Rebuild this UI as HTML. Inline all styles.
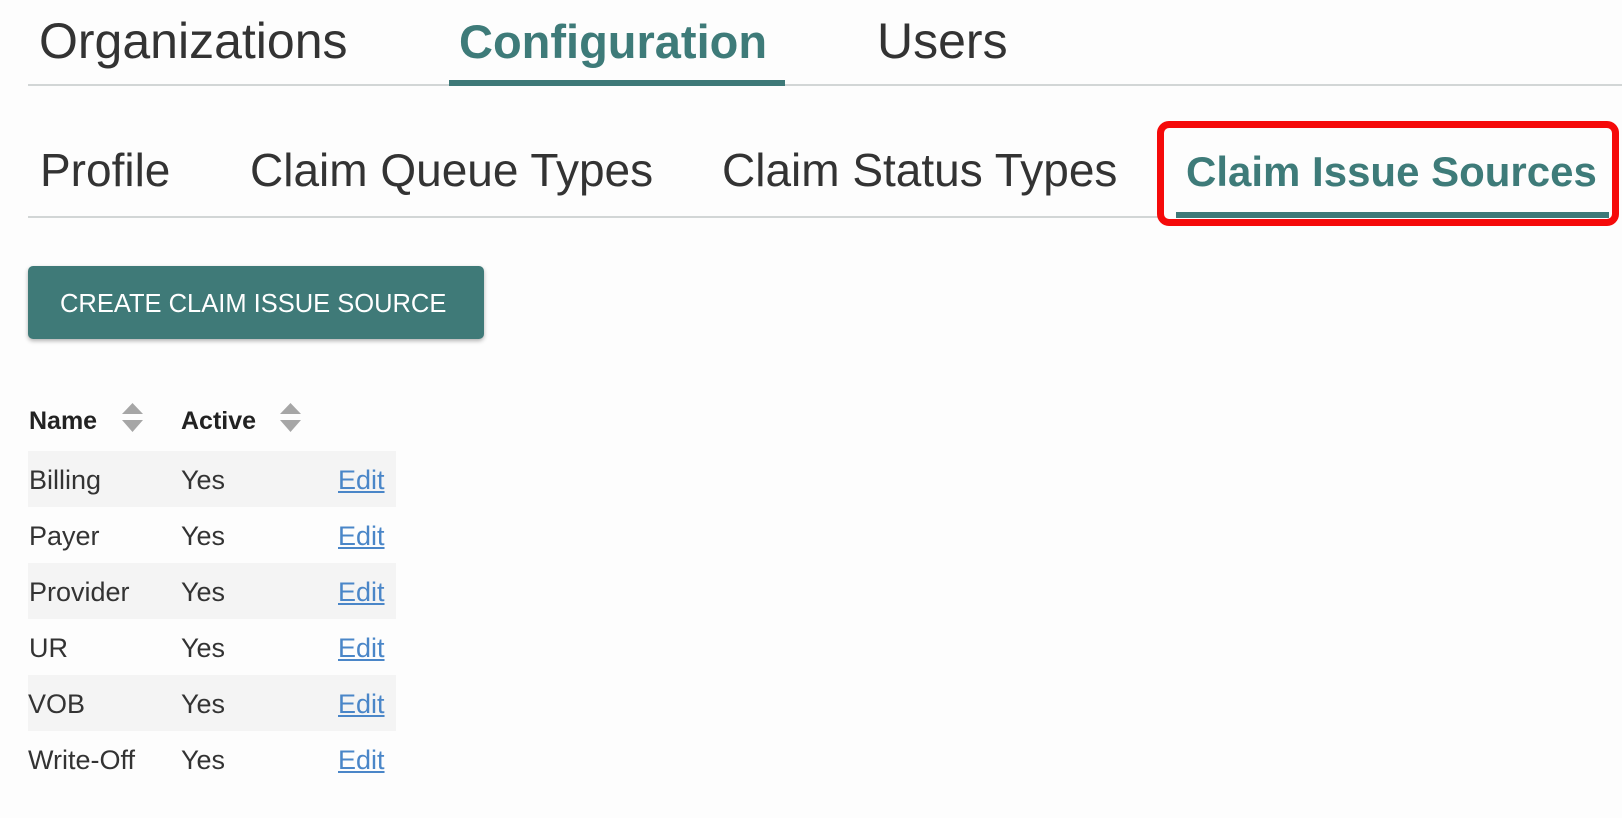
<!DOCTYPE html>
<html><head><meta charset="utf-8"><style>
*{margin:0;padding:0;box-sizing:border-box}
body{width:1622px;height:818px;background:#fdfdfd;font-family:"Liberation Sans",sans-serif;color:#333;position:relative;overflow:hidden}
.t{position:absolute;line-height:1;white-space:nowrap}
.nav{font-size:50px;top:16px;color:#333}
.sub{font-size:46px;top:147px;color:#333}
.teal{color:#3e7b79;font-weight:bold}
.line{position:absolute;background:#d2d6d6}
.ul{position:absolute;background:#3e7978}
.row{position:absolute;left:28px;width:368px;height:56px;font-size:27px}
.row span{position:absolute;top:16px;line-height:1}
.row .e{left:310px;color:#4a86c8;text-decoration:underline}
.odd{background:#f4f4f4}
.sort{position:absolute;width:21px;height:29px}
</style></head><body>
<div class="t nav" style="left:39px">Organizations</div>
<div class="t nav teal" style="left:459px;font-size:47px;top:18px">Configuration</div>
<div class="t nav" style="left:877px">Users</div>
<div class="line" style="left:28px;right:0;top:84px;height:2px"></div>
<div class="ul" style="left:449px;width:336px;top:80px;height:6px"></div>

<div class="t sub" style="left:40px">Profile</div>
<div class="t sub" style="left:250px">Claim Queue Types</div>
<div class="t sub" style="left:722px">Claim Status Types</div>
<div class="t sub teal" style="left:1186px;font-size:42px;top:151px">Claim Issue Sources</div>
<div class="line" style="left:28px;width:1135px;top:216px;height:2px"></div>
<div class="ul" style="left:1176px;width:433px;top:212px;height:6px"></div>
<div style="position:absolute;left:1157px;top:121px;width:462px;height:105px;border:7px solid #f50a0a;border-radius:12px"></div>

<div style="position:absolute;left:28px;top:266px;width:456px;height:73px;background:#3f7a78;border-radius:5px;box-shadow:0 2px 4px rgba(0,0,0,.3)"></div>
<div class="t" style="left:60px;top:292px;font-size:25.5px;color:#fff">CREATE CLAIM ISSUE SOURCE</div>

<div class="t" style="left:29px;top:409px;font-size:25px;font-weight:bold;color:#222">Name</div>
<div class="t" style="left:181px;top:409px;font-size:25px;font-weight:bold;color:#222">Active</div>
<svg class="sort" style="left:122px;top:403px" viewBox="0 0 21 29"><path d="M10.5 0 L21 11 H0Z M0 17 H21 L10.5 29Z" fill="#a6a6a6"/></svg>
<svg class="sort" style="left:280px;top:403px" viewBox="0 0 21 29"><path d="M10.5 0 L21 11 H0Z M0 17 H21 L10.5 29Z" fill="#a6a6a6"/></svg>

<div class="row odd" style="top:451px"><span style="left:1px">Billing</span><span style="left:153px">Yes</span><span class="e">Edit</span></div>
<div class="row" style="top:507px"><span style="left:1px">Payer</span><span style="left:153px">Yes</span><span class="e">Edit</span></div>
<div class="row odd" style="top:563px"><span style="left:1px">Provider</span><span style="left:153px">Yes</span><span class="e">Edit</span></div>
<div class="row" style="top:619px"><span style="left:1px">UR</span><span style="left:153px">Yes</span><span class="e">Edit</span></div>
<div class="row odd" style="top:675px"><span style="left:0">VOB</span><span style="left:153px">Yes</span><span class="e">Edit</span></div>
<div class="row" style="top:731px"><span style="left:0">Write-Off</span><span style="left:153px">Yes</span><span class="e">Edit</span></div>
</body></html>
